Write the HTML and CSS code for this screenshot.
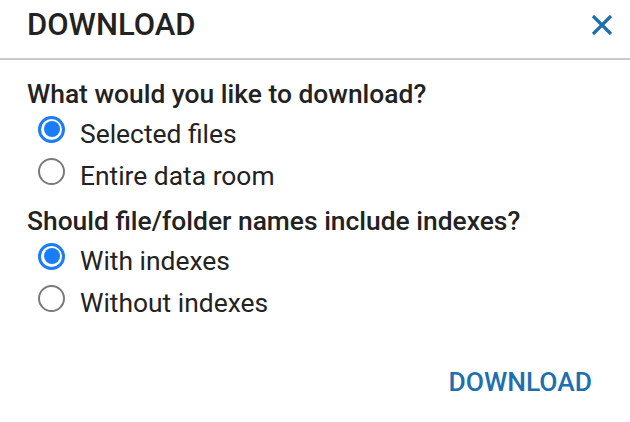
FILE: index.html
```html
<!DOCTYPE html>
<html lang="en">
<head>
<meta charset="utf-8">
<title>Download</title>
<link rel="stylesheet" href="styles.css">
</head>
<body>
<div class="dialog">
  <div class="header">
    <h1 class="title">DOWNLOAD</h1>
    <button class="close" aria-label="Close">
      <svg width="22" height="22" viewBox="0 0 22 22"><path d="M2 2 L20 20 M20 2 L2 20" stroke="currentColor" stroke-width="3.2" fill="none"/></svg>
    </button>
  </div>
  <div class="body">
    <div class="group">
      <div class="question">What would you like to download?</div>
      <div class="options">
        <label class="option"><span class="radio checked"></span><span class="label">Selected files</span></label>
        <label class="option"><span class="radio"></span><span class="label">Entire data room</span></label>
      </div>
    </div>
    <div class="group">
      <div class="question">Should file/folder names include indexes?</div>
      <div class="options">
        <label class="option"><span class="radio checked"></span><span class="label">With indexes</span></label>
        <label class="option"><span class="radio"></span><span class="label">Without indexes</span></label>
      </div>
    </div>
  </div>
  <div class="footer">
    <button class="action">DOWNLOAD</button>
  </div>
</div>
</body>
</html>
```
FILE: styles.css
```css
html, body {
  margin: 0;
  padding: 0;
  background: #ffffff;
}
body {
  font-family: Roboto, "Liberation Sans", sans-serif;
  color: #222222;
}
.dialog {
  width: 630px;
  height: 422px;
}
.header {
  height: 60px;
  display: flex;
  align-items: flex-start;
  justify-content: space-between;
  padding: 7px 17px 0 27px;
  box-sizing: border-box;
  border-bottom: 2px solid #c9c9c9;
}
.title {
  margin: 0;
  font-size: 31px;
  line-height: 36px;
  font-weight: 500;
  color: #222222;
}
.close {
  border: 0;
  background: none;
  padding: 0;
  margin-top: 7px;
  color: #1e6fae;
  display: flex;
  cursor: pointer;
}
.body {
  padding: 14px 27px 0 27px;
  display: flex;
  flex-direction: column;
  gap: 5px;
}
.question {
  font-size: 26.4px;
  line-height: 40px;
  font-weight: 500;
}
.options {
  display: flex;
  flex-direction: column;
  gap: 2px;
  padding-left: 11px;
}
.option {
  display: flex;
  align-items: flex-start;
  height: 40px;
  font-size: 26.4px;
  line-height: 40px;
  cursor: pointer;
}
.radio {
  width: 27px;
  height: 27px;
  box-sizing: border-box;
  border-radius: 50%;
  border: 2px solid #7a7a7a;
  margin-top: 1.5px;
  margin-right: 15px;
  flex: none;
  position: relative;
}
.radio.checked {
  border: 3px solid #1a7cf6;
}
.radio.checked::after {
  content: "";
  position: absolute;
  left: 2.5px;
  top: 2.5px;
  width: 16px;
  height: 16px;
  border-radius: 50%;
  background: #1a7cf6;
}
.footer {
  display: flex;
  justify-content: flex-end;
  padding: 39px 38px 0 0;
}
.action {
  border: 0;
  background: none;
  padding: 0;
  font-family: Roboto, "Liberation Sans", sans-serif;
  font-size: 26.4px;
  line-height: 40px;
  font-weight: 500;
  color: #1e6fae;
  cursor: pointer;
}
```
